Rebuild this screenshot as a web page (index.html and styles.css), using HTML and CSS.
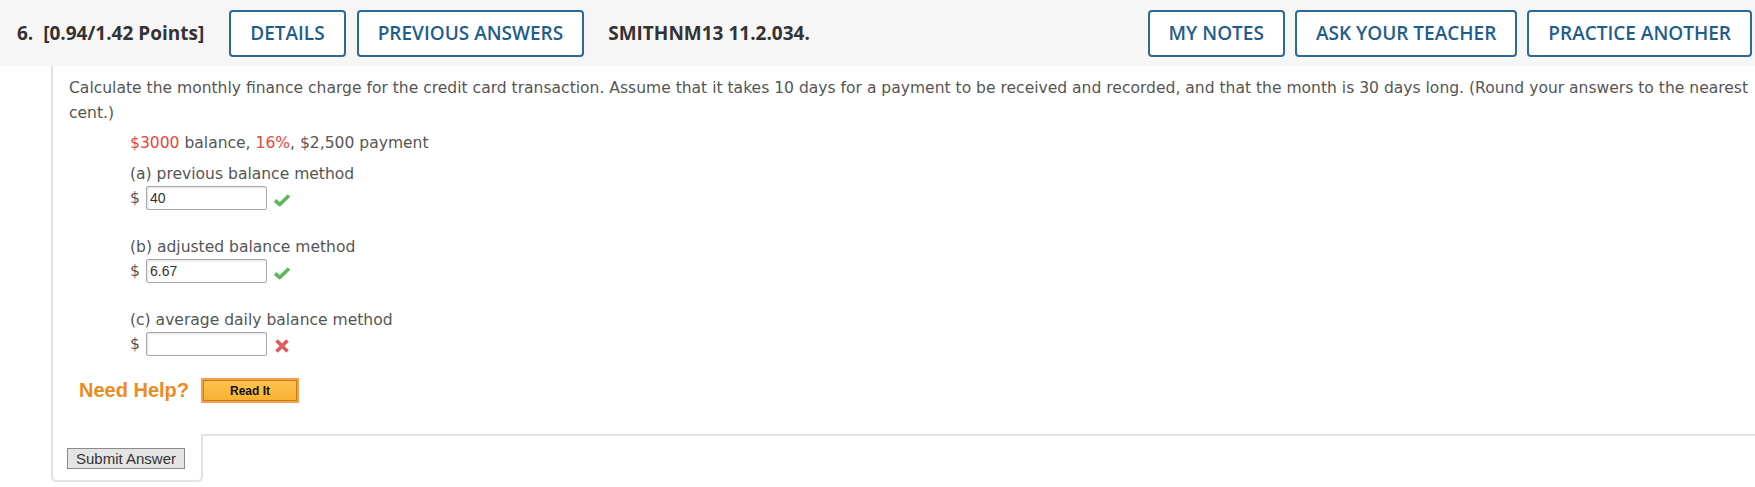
FILE: index.html
```html
<!DOCTYPE html>
<html lang="en">
<head>
<meta charset="utf-8">
<title>Question 6</title>
<link rel="stylesheet" href="styles.css">
</head>
<body>
<header class="qhead">
  <span class="qnum">6.&nbsp; [0.94/1.42 Points]</span>
  <button class="hbtn">DETAILS</button>
  <button class="hbtn">PREVIOUS ANSWERS</button>
  <span class="qcode">SMITHNM13 11.2.034.</span>
  <div class="hright">
    <button class="hbtn">MY NOTES</button>
    <button class="hbtn">ASK YOUR TEACHER</button>
    <button class="hbtn">PRACTICE ANOTHER</button>
  </div>
</header>
<section class="qbox">
  <div class="qbody">
    <p class="prompt">Calculate the monthly finance charge for the credit card transaction. Assume that it takes 10 days for a payment to be received and recorded, and that the month is 30 days long. (Round your answers to the nearest cent.)</p>
    <div class="parts">
      <p class="given"><span class="red">$3000</span> balance, <span class="red">16%</span>, $2,500 payment</p>
      <div class="part">
        <div class="plabel">(a) previous balance method</div>
        <div class="arow"><span class="cur">$</span><span class="ans">40</span>
          <svg class="mark" width="18" height="14" viewBox="0 0 18 14"><path d="M2 7.5 L6.8 11.5 L16 2.5" fill="none" stroke="#5cb85c" stroke-width="3.6" stroke-linejoin="round"/></svg>
        </div>
      </div>
      <div class="part">
        <div class="plabel">(b) adjusted balance method</div>
        <div class="arow"><span class="cur">$</span><span class="ans">6.67</span>
          <svg class="mark" width="18" height="14" viewBox="0 0 18 14"><path d="M2 7.5 L6.8 11.5 L16 2.5" fill="none" stroke="#5cb85c" stroke-width="3.6" stroke-linejoin="round"/></svg>
        </div>
      </div>
      <div class="part">
        <div class="plabel">(c) average daily balance method</div>
        <div class="arow"><span class="cur">$</span><span class="ans"></span>
          <svg class="mark" width="18" height="14" viewBox="0 0 18 14"><path d="M3.5 1.5 L14.5 12.5 M14.5 1.5 L3.5 12.5" fill="none" stroke="#e35b5b" stroke-width="3.6"/></svg>
        </div>
      </div>
    </div>
    <div class="help">
      <span class="need">Need Help?</span>
      <button class="readit">Read It</button>
    </div>
  </div>
  <div class="qfoot">
    <div class="subtab"><button class="submit">Submit Answer</button></div>
    <div class="footrest"></div>
  </div>
</section>
</body>
</html>
```
FILE: styles.css
```css
html, body {
  margin: 0;
  padding: 0;
  background: #fff;
}
body {
  font-family: "DejaVu Sans", Verdana, sans-serif;
  color: #555;
}
.qhead {
  display: flex;
  align-items: center;
  height: 66px;
  background: #f6f6f6;
  padding: 0 3px 0 17px;
  font-family: "Open Sans", sans-serif;
  color: #333;
}
.qnum {
  font-size: 19px;
  font-weight: 700;
  margin-right: 25px;
}
.hbtn {
  height: 47px;
  padding: 0 19px;
  border: 2px solid #2b6a98;
  border-radius: 4px;
  background: #fff;
  color: #1f5e8c;
  font-family: "Open Sans", sans-serif;
  font-size: 19px;
  font-weight: 600;
  margin-right: 11px;
  cursor: pointer;
}
.qcode {
  font-size: 19px;
  font-weight: 700;
  margin-left: 13px;
}
.hright {
  margin-left: auto;
  display: flex;
  gap: 10px;
}
.hright .hbtn {
  margin-right: 0;
}
.qbox {
  margin-left: 51px;
}
.qbody {
  border-left: 2px solid #e2e2e2;
  padding: 10px 4px 31px 16px;
}
.prompt {
  margin: 0;
  font-size: 15.55px;
  line-height: 25px;
}
.parts {
  margin-left: 61px;
  font-size: 15.55px;
}
.given {
  margin: 5px 0 0;
  line-height: 25px;
}
.red {
  color: #e8453c;
}
.part {
  margin-top: 6px;
}
.part + .part {
  margin-top: 25px;
}
.plabel {
  line-height: 24px;
}
.arow {
  display: flex;
  align-items: center;
  height: 24px;
}
.cur {
  width: 16px;
}
.ans {
  box-sizing: border-box;
  width: 121px;
  height: 24px;
  border: 1px solid #a9a9a9;
  border-radius: 2px;
  box-shadow: inset 1px 1px 2px rgba(0,0,0,0.12);
  padding: 2px 3px;
  font-family: "Liberation Sans", Arial, sans-serif;
  font-size: 14px;
  line-height: 18px;
  color: #333;
}
.mark {
  margin-left: 6px;
  margin-top: 4px;
}
.help {
  display: flex;
  align-items: center;
  margin: 22px 0 0 10px;
  height: 25px;
}
.need {
  font-family: "Liberation Sans", Arial, sans-serif;
  font-weight: 700;
  font-size: 20px;
  color: #ee8a22;
  margin-right: 12px;
}
.readit {
  box-sizing: border-box;
  width: 98px;
  height: 25px;
  border: 2px solid #f3a24a;
  box-shadow: inset 0 0 0 1px #c97a1e;
  background: linear-gradient(#fcc450, #f8b030);
  font-family: "Liberation Sans", Arial, sans-serif;
  font-weight: 700;
  font-size: 12px;
  color: #111;
  padding: 0;
}
.qfoot {
  display: flex;
}
.subtab {
  box-sizing: border-box;
  width: 152px;
  height: 48px;
  border: 2px solid #e2e2e2;
  border-top: none;
  border-radius: 0 0 5px 5px;
  padding: 14px 0 0 14px;
}
.footrest {
  flex: 1;
  border-top: 2px solid #e2e2e2;
  margin-left: -2px;
  border-top-left-radius: 4px;
}
.submit {
  height: 21px;
  padding: 0 8px;
  border: 1px solid #8a8a8a;
  background: #e4e4e4;
  font-family: "Liberation Sans", Arial, sans-serif;
  font-size: 15px;
  color: #333;
  line-height: 19px;
}
```
